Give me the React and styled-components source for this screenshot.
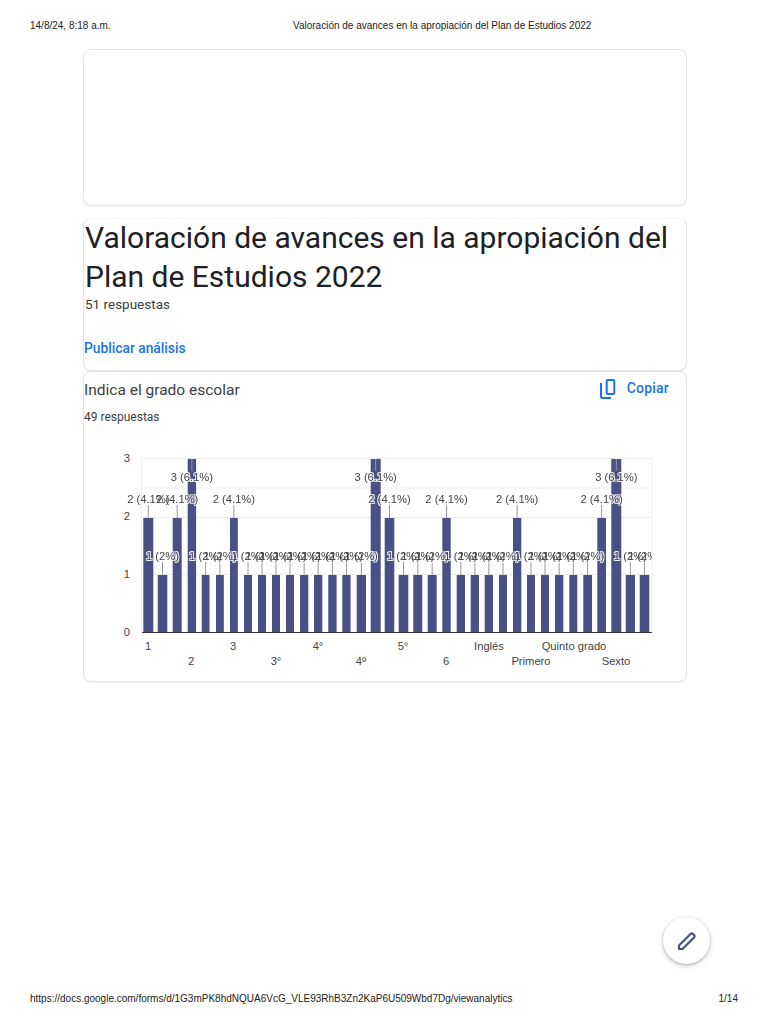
import React from 'react';
import styled, { createGlobalStyle } from 'styled-components';

const Global = createGlobalStyle`
  html, body { margin: 0; padding: 0; background: #fff; }
  #root { width: 768px; height: 1024px; }
`;
const Page = styled.div`
  position: relative; width: 768px; height: 1024px; box-sizing: border-box;
  display: flex; flex-direction: column; overflow: hidden;
  padding: 19px 30px 19px 30px; font-family: "Liberation Sans", Arial, sans-serif; color: #222;
`;
const PrintBar = styled.div`
  display: grid; grid-template-columns: 263px auto; align-items: center;
  font-size: 10px; line-height: 13px; color: #222;
`;
const Cards = styled.main`
  display: flex; flex-direction: column; margin: 17px 1px 0 53px; width: 604px;
`;
const Card = styled.section`
  box-sizing: border-box; background: #fff; border: 1px solid #e3e3ea; border-radius: 8px;
  box-shadow: 0 1px 1px rgba(60,64,67,.06);
`;
const BannerCard = styled(Card)`
  height: 157px; margin-bottom: 12px;
`;
const TitleCard = styled(Card)`
  height: 153px; padding: 0 0 0 1px; border-top-color: #f6f6f8;
`;
const Title = styled.h1`
  margin: -1px 0 0; font: 400 30px/39px Roboto, sans-serif; color: #202124;
`;
const Count = styled.div`
  font: 400 13.5px/16px Roboto, sans-serif; color: #3c4043;
`;
const PublishLink = styled.a`
  display: block; margin-top: 26px; margin-left: -1px; font: 500 13.8px/20px Roboto, sans-serif;
  color: #1a73e8;
`;
const QuestionCard = styled(Card)`
  height: 311px; padding: 8px 0 0 0;
`;
const QuestionHead = styled.div`
  display: flex; justify-content: space-between; align-items: flex-start; padding-right: 17px; height: 20px;
`;
const QuestionTitle = styled.h2`
  margin: 0; font: 400 15.5px/20px Roboto, sans-serif; color: #3c4043;
`;
const CopyButton = styled.button`
  display: flex; align-items: center; gap: 9px; border: 0; padding: 0; margin-top: -4px; background: none;
  font: 500 14px/20px Roboto, sans-serif; color: #1a73e8; letter-spacing: .2px;
`;
const Responses = styled.div`
  font: 400 12px/16px Roboto, sans-serif; color: #3c4043; margin-top: 9px;
`;
const ChartSvg = styled.svg`
  display: block; margin: 5px 0 0 -84px; overflow: visible;
  text { font-family: "Liberation Sans", Arial, sans-serif; font-size: 11.2px; fill: #444; }
`;
const Footer = styled.footer`
  margin-top: auto; display: flex; justify-content: space-between;
  font-size: 10px; line-height: 13px; color: #222;
`;
const Fab = styled.button`
  position: absolute; left: 663px; top: 917px; width: 47px; height: 47px; border-radius: 50%;
  border: 0; background: #fff; padding: 0; display: flex; align-items: center; justify-content: center;
  box-shadow: 0 1px 3px rgba(60,64,67,.35), 0 2px 6px rgba(60,64,67,.15);
`;

const V = { 0: 632, 1: 575, 2: 518, 3: 459 };
const bars = [
  [143.3,10,2],[157.7,9.6,1],[172.7,9,2],[187.7,8.4,3],[201.7,7.8,1],[216,7.8,1],[230,7.8,2],
  [244,8,1],[258,8,1],[272,8,1],[286,8,1],[300,8.3,1],[314,8.3,1],[328.3,8.3,1],[342.3,8.3,1],[356.7,9.3,1],
  [370.7,10,3],[384.7,9.6,2],[398.7,9.6,1],[413.3,9,1],[427.7,9,1],[442.3,8.4,2],[456.7,8.3,1],[470.7,8.3,1],
  [484.7,8.3,1],[499,8,1],[513,8.3,2],[527,8,1],[541,8,1],[555,8.3,1],[569.3,8,1],[583.3,8.7,1],
  [597.3,8.7,2],[611.3,10,3],[625.7,9.3,1],[639.7,9.6,1],
];
const pct = { 1: '1 (2%)', 2: '2 (4.1%)', 3: '3 (6.1%)' };
const labelBase = { 1: 560, 2: 503, 3: 481 };
const leader = { 1: [562, 575], 2: [505, 518], 3: [459, 471] };
const row1 = [['1',148],['3',233],['4°',318],['5°',403],['Inglés',489],['Quinto grado',574]];
const row2 = [['2',191],['3°',276],['4º',361],['6',446],['Primero',531],['Sexto',616]];

function Chart() {
  return (
    <ChartSvg width="700" height="245" viewBox="0 430 700 245">
      <defs>
        <clipPath id="plot"><rect x="0" y="430" width="652" height="245" /></clipPath>
        <filter id="halo" filterUnits="userSpaceOnUse" x="100" y="450" width="600" height="130" colorInterpolationFilters="sRGB">
          <feMorphology in="SourceAlpha" operator="dilate" radius="1.1" result="grown" />
          <feFlood floodColor="#fff" />
          <feComposite in2="grown" operator="in" result="halo" />
          <feMerge>
            <feMergeNode in="halo" />
            <feMergeNode in="SourceGraphic" />
          </feMerge>
        </filter>
      </defs>
      {[458.5, 488, 517.5, 574.5].map(y => <line key={y} x1="141" x2="652" y1={y} y2={y} stroke="#ebebeb" />)}
      <line x1="141.5" x2="141.5" y1="458" y2="632" stroke="#eee" />
      <line x1="652" x2="652" y1="458" y2="632" stroke="#eee" />
      {bars.map(([x, w, v], i) => <rect key={i} x={x} y={V[v]} width={w} height={632 - V[v]} fill="#4a4f85" />)}
      <line x1="142" x2="652" y1="632.5" y2="632.5" stroke="#333" />
      <g clipPath="url(#plot)">
        {bars.map(([x, w, v], i) => {
          const c = x + w / 2;
          return <line key={i} x1={c} x2={c} y1={leader[v][0]} y2={leader[v][1]} stroke="#999" />;
        })}
        <g filter="url(#halo)">
          {bars.map(([x, w, v], i) => (
            <text key={i} x={x + w / 2} y={labelBase[v]} textAnchor="middle">{pct[v]}</text>
          ))}
        </g>
      </g>
      {[[3,462],[2,520],[1,578],[0,636]].map(([n, y]) => <text key={n} x="130" y={y} textAnchor="end">{n}</text>)}
      {row1.map(([t, x]) => <text key={t} x={x} y="649.5" textAnchor="middle">{t}</text>)}
      {row2.map(([t, x]) => <text key={t} x={x} y="665" textAnchor="middle">{t}</text>)}
    </ChartSvg>
  );
}

export default function App() {
  return (
    <Page>
      <Global />
      <PrintBar>
        <span>14/8/24, 8:18 a.m.</span>
        <span>Valoración de avances en la apropiación del Plan de Estudios 2022</span>
      </PrintBar>
      <Cards>
        <BannerCard />
        <TitleCard>
          <Title>Valoración de avances en la apropiación del Plan de Estudios 2022</Title>
          <Count>51 respuestas</Count>
          <PublishLink>Publicar análisis</PublishLink>
        </TitleCard>
        <QuestionCard>
          <QuestionHead>
            <QuestionTitle>Indica el grado escolar</QuestionTitle>
            <CopyButton>
              <svg width="22" height="24" viewBox="0 0 22 24" fill="none" stroke="#1a73e8" strokeWidth="2">
                <rect x="10.7" y="4" width="7.6" height="14" rx="1" />
                <path d="M5 7v13.5A1.5 1.5 0 0 0 6.5 22H15" />
              </svg>
              Copiar
            </CopyButton>
          </QuestionHead>
          <Responses>49 respuestas</Responses>
          <Chart />
        </QuestionCard>
      </Cards>
      <Footer>
        <span>https://docs.google.com/forms/d/1G3mPK8hdNQUA6VcG_VLE93RhB3Zn2KaP6U509Wbd7Dg/viewanalytics</span>
        <span>1/14</span>
      </Footer>
      <Fab>
        <svg width="22" height="22" viewBox="0 0 22 22" fill="none" stroke="#4a4f85" strokeWidth="2.2" strokeLinejoin="round">
          <path d="M3 19v-3.5L14.5 4a1.8 1.8 0 0 1 2.5 0l1 1a1.8 1.8 0 0 1 0 2.5L6.5 19z" />
        </svg>
      </Fab>
    </Page>
  );
}
